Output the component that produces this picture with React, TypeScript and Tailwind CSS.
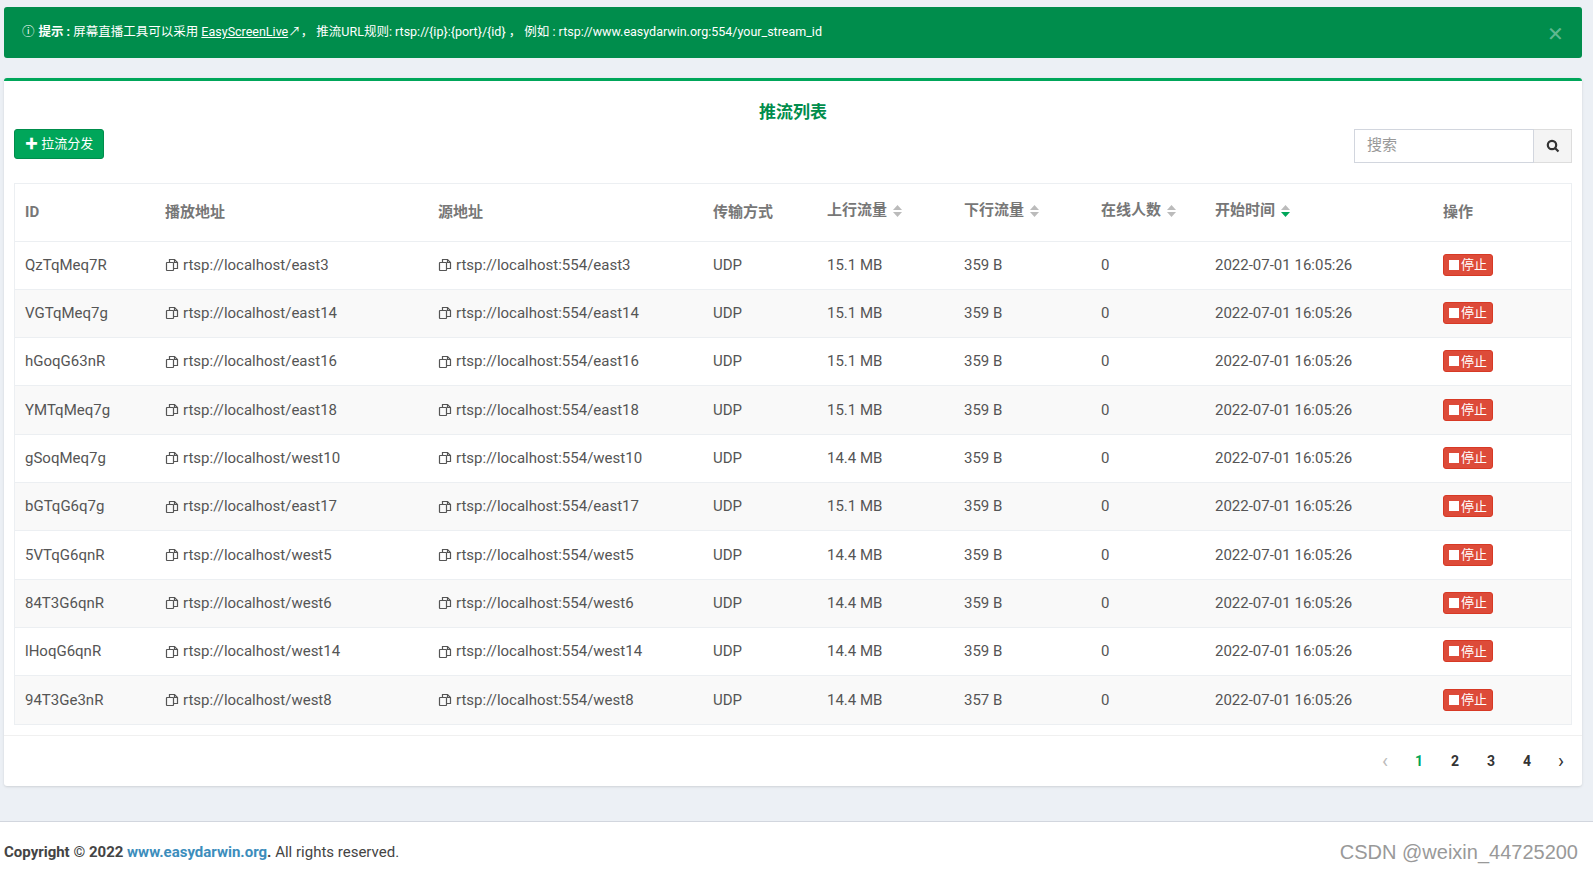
import React from "react";

const rows = [
  ["QzTqMeq7R", "east3", "15.1 MB", "359 B"],
  ["VGTqMeq7g", "east14", "15.1 MB", "359 B"],
  ["hGoqG63nR", "east16", "15.1 MB", "359 B"],
  ["YMTqMeq7g", "east18", "15.1 MB", "359 B"],
  ["gSoqMeq7g", "west10", "14.4 MB", "359 B"],
  ["bGTqG6q7g", "east17", "15.1 MB", "359 B"],
  ["5VTqG6qnR", "west5", "14.4 MB", "359 B"],
  ["84T3G6qnR", "west6", "14.4 MB", "359 B"],
  ["lHoqG6qnR", "west14", "14.4 MB", "359 B"],
  ["94T3Ge3nR", "west8", "14.4 MB", "357 B"],
];

const Copy = () => (
  <svg width="14" height="14" viewBox="0 0 14 14" fill="none" stroke="#555" strokeWidth="1.2" className="mr-1 shrink-0">
    <rect x="1.5" y="4.5" width="7" height="8" rx="0.5" />
    <path d="M4.5 4.5V1.5h5l3 3v6h-4" />
    <path d="M9.5 1.5v3h3" />
  </svg>
);

const Sort = ({ active }: { active?: boolean }) => (
  <svg width="9" height="12" viewBox="0 0 9 12" className="ml-1.5 inline-block">
    <path d="M4.5 0L9 5H0z" fill="#bbb" />
    <path d="M4.5 12L0 7h9z" fill={active ? "#00a65a" : "#bbb"} />
  </svg>
);

const cols = ["w-[140px]", "w-[273px]", "w-[275px]", "w-[114px]", "w-[137px]", "w-[137px]", "w-[114px]", "w-[228px]", "flex-1"];

export default function App() {
  return (
    <div className="min-h-[878px] bg-[#ecf0f5] text-[15px] text-[#333] flex flex-col" style={{ fontFamily: "Roboto, 'Noto Sans CJK SC', sans-serif" }}>
      <div className="pr-[11px] pl-[4px] pt-[7px]">
        <div className="h-[51px] bg-[#008d4c] rounded-[3px] text-white text-[12.5px] flex items-center px-[18px] relative">
          <span className="mr-1">ⓘ</span>
          <b>提示 :</b>&nbsp;屏幕直播工具可以采用&nbsp;<span className="underline">EasyScreenLive</span>↗，&nbsp;推流URL规则: rtsp://{"{ip}"}:{"{port}"}/{"{id}"}&nbsp;，&nbsp;例如 : rtsp://www.easydarwin.org:554/your_stream_id
          <span className="absolute right-[18px] top-[12px] text-[20px] text-white/40">✕</span>
        </div>
        <div className="mt-[20px] bg-white border-t-[3px] border-[#00a65a] rounded-[3px] shadow-sm h-[708px] flex flex-col">
          <div className="text-center text-[#008d4c] font-bold text-[17px] mt-[19px]">推流列表</div>
          <div className="flex justify-between items-start px-[10px] mt-[3px]">
            <button className="h-[30px] px-[10px] bg-[#00a65a] border border-[#008d4c] text-white text-[13px] rounded-[3px]">✚ 拉流分发</button>
            <div className="flex h-[34px]">
              <div className="w-[180px] border border-[#d2d6de] text-[#999] px-[12px] flex items-center">搜索</div>
              <div className="w-[38px] bg-[#f4f4f4] border border-l-0 border-[#ddd] flex items-center justify-center">
                <svg width="14" height="14" viewBox="0 0 14 14" fill="none" stroke="#333" strokeWidth="2.2"><circle cx="6" cy="6" r="4.2" /><path d="M9 9l3.5 3.5" /></svg>
              </div>
            </div>
          </div>
          <div className="mx-[10px] mt-[20px] border border-[#eceff2]">
            <div className="flex h-[58px] items-center text-[#777] font-bold border-b border-[#eceff2]">
              {["ID", "播放地址", "源地址", "传输方式", "上行流量", "下行流量", "在线人数", "开始时间", "操作"].map((h, i) => (
                <div key={h} className={`${cols[i]} px-[10px] ${i >= 4 && i <= 7 ? "-mt-[4px]" : ""}`}>
                  {h}
                  {i >= 4 && i <= 7 && <Sort active={i === 7} />}
                </div>
              ))}
            </div>
            {rows.map((r, idx) => (
              <div key={r[0]} className={`flex h-[48.3px] items-center text-[#555] ${idx % 2 === 0 ? "bg-white" : "bg-[#f9f9f9]"} ${idx < 9 ? "border-b border-[#eceff2]" : ""}`}>
                <div className={`${cols[0]} px-[10px]`}>{r[0]}</div>
                <div className={`${cols[1]} px-[10px] flex items-center`}><Copy />rtsp://localhost/{r[1]}</div>
                <div className={`${cols[2]} px-[10px] flex items-center`}><Copy />rtsp://localhost:554/{r[1]}</div>
                <div className={`${cols[3]} px-[10px]`}>UDP</div>
                <div className={`${cols[4]} px-[10px]`}>{r[2]}</div>
                <div className={`${cols[5]} px-[10px]`}>{r[3]}</div>
                <div className={`${cols[6]} px-[10px]`}>0</div>
                <div className={`${cols[7]} px-[10px]`}>2022-07-01 16:05:26</div>
                <div className={`${cols[8]} px-[10px]`}>
                  <span className="inline-flex items-center h-[22px] px-[5px] bg-[#dd4b39] border border-[#d73925] text-white text-[13px] rounded-[3px]">
                    <span className="w-[10px] h-[10px] bg-white mr-[2px]" />停止
                  </span>
                </div>
              </div>
            ))}
          </div>
          <div className="mt-[10px] border-t border-[#f0f0f0] flex justify-end items-center h-[52px] pr-[18px] gap-[26px] text-[14px] font-bold">
            <span className="text-[#bbb] font-normal text-[20px]">‹</span>
            <span className="text-[#00a65a] w-[10px] text-center">1</span>
            <span className="w-[10px] text-center">2</span>
            <span className="w-[10px] text-center">3</span>
            <span className="w-[10px] text-center">4</span>
            <span className="font-normal text-[20px]">›</span>
          </div>
        </div>
      </div>
      <div className="mt-[35px] flex-1 bg-white border-t border-[#d2d6de] flex items-center justify-between pl-[4px] pr-[15px] pb-[8px] pt-[12px]">
        <span className="text-[15px] text-[#444]"><b>Copyright © 2022 <span className="text-[#3c8dbc]">www.easydarwin.org</span>.</b> All rights reserved.</span>
        <span className="text-[20px] text-[#999]" style={{ fontFamily: "'Liberation Sans', sans-serif" }}>CSDN @weixin_44725200</span>
      </div>
    </div>
  );
}
